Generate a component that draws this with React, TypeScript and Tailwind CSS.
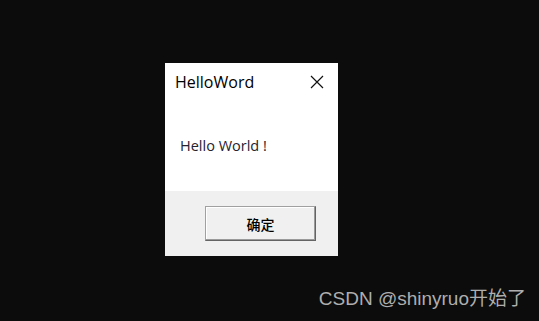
import React from "react";

export default function App() {
  return (
    <div className="relative h-[321px] w-[539px] overflow-hidden bg-[#0c0c0c] pl-[165px] pt-[63px]" style={{ fontFamily: '"Noto Sans", "Noto Sans CJK SC", sans-serif' }}>
      <div className="flex h-[193px] w-[173px] flex-col bg-white">
        <div className="flex h-[128px] flex-col">
          <div className="flex h-[37px] items-center justify-between pl-[10px] pr-[14px]">
            <span className="text-[16px] leading-none text-black" style={{ fontFamily: '"Open Sans", "Noto Sans", sans-serif' }}>HelloWord</span>
            <svg width="14" height="14" viewBox="0 0 14 14" className="mt-[1px]">
              <path d="M1 1 L13 13 M13 1 L1 13" stroke="#111" strokeWidth="1.2" fill="none" />
            </svg>
          </div>
          <div className="pl-[15px] pt-[39px] text-[14.5px] leading-none text-[#26222e]" style={{ fontFamily: '"Open Sans", "Noto Sans", sans-serif' }}>
            Hello World !
          </div>
        </div>
        <div className="flex flex-1 items-start bg-[#f0f0f0] pl-[40px] pt-[15px]">
          <div className="flex h-[35px] w-[111px] items-center justify-center border border-t-[#a0a0a0] border-l-[#a0a0a0] border-b-[#646464] border-r-[#646464] bg-[#f0f0f0] shadow-[inset_-1px_-1px_0_#9a9a9a,inset_1px_1px_0_#ffffff]">
            <span className="text-[14px] font-medium leading-none text-black" style={{ fontFamily: '"Noto Sans CJK SC", sans-serif' }}>确定</span>
          </div>
        </div>
      </div>
      <div className="absolute right-[13px] top-[287px] text-[19px] leading-[24px] text-[#aeaeae]" style={{ fontFamily: '"Liberation Sans", "Noto Sans CJK SC", sans-serif' }}>
        CSDN @shinyruo开始了
      </div>
    </div>
  );
}
